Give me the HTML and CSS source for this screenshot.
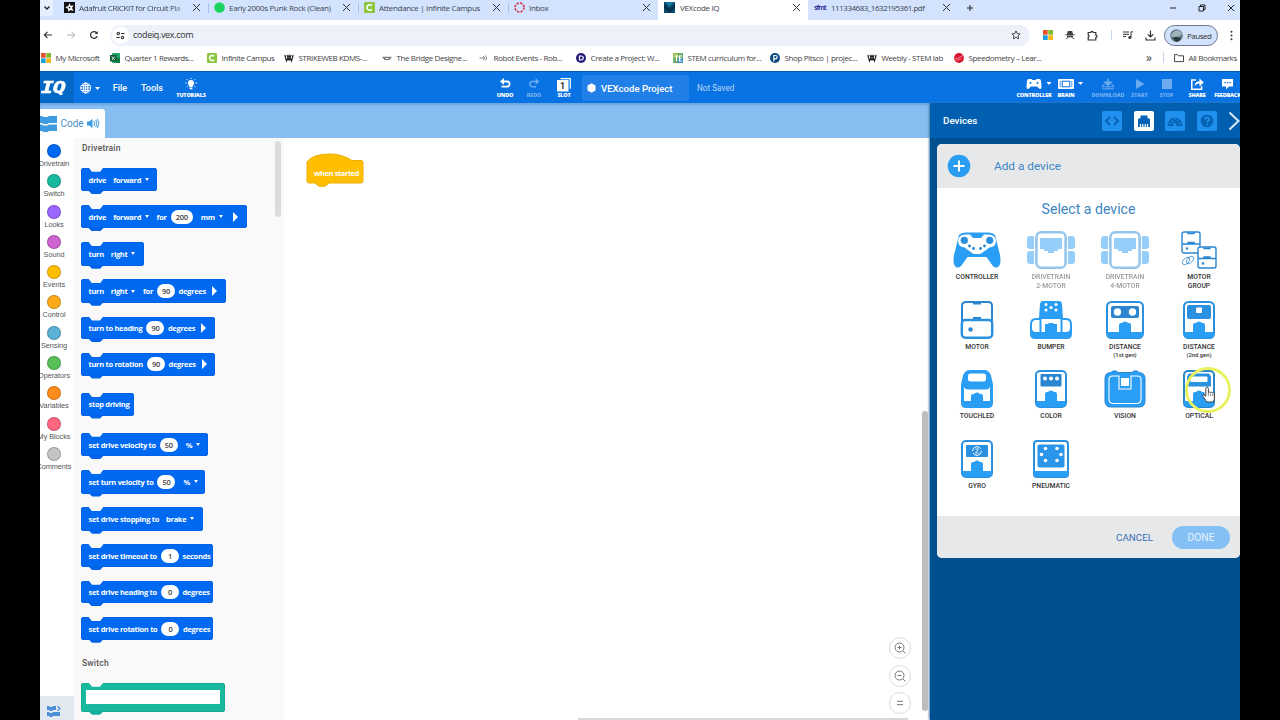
FILE: index.html
```html
<!DOCTYPE html>
<html lang="en">
<head>
    <meta charset="UTF-8">
    <title>VEXcode IQ</title>
    <link rel="stylesheet" href="styles.css">
</head>
<body>
<div class="screen">

    <!-- Browser tabs -->
    <div class="tabs">
        <div class="tab-search"><svg width="8" height="6" viewBox="0 0 8 6"><path d="M1.5 1.5L4 4l2.5-2.5" fill="none" stroke="#222" stroke-width="1.3"/></svg></div>
        <div class="tab">
            <svg class="fav" viewBox="0 0 11 11"><rect width="11" height="11" fill="#111"/><path d="M5.5 1l1.2 2.8 3-.4-1.7 2.4 1.5 3.2-3-1-2.2 1.7-.2-2.8L1.2 5l3-.8z" fill="#fff"/><circle cx="5.5" cy="5.6" r=".9" fill="#111"/></svg>
            <span class="tab-title t1">Adafruit CRICKIT for Circuit Pla</span><span class="x"></span>
        </div>
        <div class="tab">
            <svg class="fav" viewBox="0 0 11 11"><circle cx="5.5" cy="5.5" r="5.3" fill="#1ed760"/><path d="M2.5 4q3-1 6 .6M3 6q2.5-.7 5 .5M3.2 7.7q2-.5 4 .4" stroke="#1bc457" fill="none" stroke-width=".8"/></svg>
            <span class="tab-title">Early 2000s Punk Rock (Clean)</span><span class="x"></span>
        </div>
        <div class="tab">
            <svg class="fav" viewBox="0 0 11 11"><rect width="11" height="11" rx="1" fill="#8cc63f"/><path d="M7.8 3.6A2.8 2.8 0 1 0 7.8 7.4" fill="none" stroke="#fff" stroke-width="1.6"/></svg>
            <span class="tab-title">Attendance | Infinite Campus</span><span class="x"></span>
        </div>
        <div class="tab">
            <svg class="fav" viewBox="0 0 11 11"><circle cx="5.5" cy="5.5" r="4.5" fill="none" stroke="#d0314c" stroke-width="1.7" stroke-dasharray="2.3 1.23"/></svg>
            <span class="tab-title">Inbox</span><span class="x"></span>
        </div>
        <div class="tab active">
            <svg class="fav" viewBox="0 0 11 11"><rect width="11" height="11" fill="#0a4a6e"/><path d="M0 2l5.5 5L11 2v4l-5.5 5L0 6z" fill="#06304e"/><path d="M1 0h9L5.5 5z" fill="#1a78a8"/></svg>
            <span class="tab-title">VEXcode IQ</span><span class="x"></span>
        </div>
        <div class="tab last">
            <span class="sfmt">sfmt</span>
            <span class="tab-title">111334683_1632195361.pdf</span><span class="x"></span>
        </div>
        <svg class="plus" width="8" height="8" viewBox="0 0 8 8"><path d="M4 1v6M1 4h6" stroke="#222"/></svg>
        <div class="win-buttons">
            <svg width="8" height="8" viewBox="0 0 8 8"><path d="M1 4h6" stroke="#222"/></svg>
            <svg width="8" height="8" viewBox="0 0 8 8"><path d="M1 2.5h4.5V7H1zM2.5 2.5V1H7v4.5H5.5" fill="none" stroke="#222"/></svg>
            <svg width="8" height="8" viewBox="0 0 8 8"><path d="M1 1l6 6M7 1L1 7" stroke="#222"/></svg>
        </div>
    </div>

    <!-- Address row -->
    <div class="toolbar">
        <svg class="nav" viewBox="0 0 10 10"><path d="M9 5H1.5M4.5 1.8L1.3 5l3.2 3.2" fill="none" stroke="#333" stroke-width="1.1"/></svg>
        <svg class="nav" viewBox="0 0 10 10"><path d="M1 5h7.5M5.5 1.8L8.7 5 5.5 8.2" fill="none" stroke="#aaa"/></svg>
        <svg class="nav" viewBox="0 0 10 10"><path d="M8.2 6A3.4 3.4 0 1 1 7.4 2.6L8 3.3" fill="none" stroke="#333" stroke-width="1.2"/><path d="M8.8 1v3H5.8z" fill="#333"/></svg>
        <div class="address">
            <span class="site"><svg width="9" height="9" viewBox="0 0 9 9"><g fill="none" stroke="#333" stroke-width="1.1"><circle cx="2.3" cy="2.5" r="1.2"/><path d="M5 2.5h3.5M.5 6.5h3.3"/><circle cx="6.5" cy="6.5" r="1.2"/></g></svg></span>
            <span class="url">codeiq.vex.com</span>
            <svg class="star" width="10" height="10" viewBox="0 0 10 10"><path d="M5 .9l1.2 2.7 2.9.3L7 5.9l.6 2.9L5 7.3 2.4 8.8 3 5.9.9 3.9l2.9-.3z" fill="none" stroke="#333" stroke-width=".9"/></svg>
        </div>
        <div class="tools">
            <svg width="10" height="10" viewBox="0 0 10 10"><path d="M0 0h4.7v4.7H0z" fill="#e8502a"/><path d="M5.3 0H10v4.7H5.3z" fill="#7db928"/><path d="M0 5.3h4.7V10H0z" fill="#1c9fe0"/><path d="M5.3 5.3H10V10H5.3z" fill="#f7b512"/></svg>
            <svg width="10" height="10" viewBox="0 0 10 10"><path d="M2.8 1h4.4l.8 3.2H2zM.5 4.2h9v1h-9z" fill="#444"/><path d="M2 5.5h6v1.8H2z" fill="#444"/><path d="M1 9.2l2-2M9 9.2l-2-2" stroke="#444"/></svg>
            <svg width="11" height="11" viewBox="0 0 11 11"><path d="M1.2 2.5h2.6a1.2 1.2 0 0 1 2.4 0h2.6v2.6a1.2 1.2 0 0 1 0 2.4V10H1.2V7.4a1.2 1.2 0 0 0 0-2.3z" fill="none" stroke="#333" stroke-width="1.2"/></svg>
            <i class="vline"></i>
            <svg width="11" height="10" viewBox="0 0 11 10"><path d="M1 2h6M1 4.3h6M1 6.6h3M9 7.5V1.8h1.8" fill="none" stroke="#333"/><circle cx="7.8" cy="7.6" r="1.5" fill="#333"/></svg>
            <svg width="11" height="11" viewBox="0 0 11 11"><path d="M5.5.5v6.3M2.8 4.3l2.7 2.7 2.7-2.7M1 7.5V10h9V7.5" fill="none" stroke="#333" stroke-width="1.2"/></svg>
        </div>
        <div class="profile">
            <svg width="13" height="13" viewBox="0 0 13 13"><circle cx="6.5" cy="6.5" r="6.3" fill="#5e7480"/><path d="M1 6q3-5 7-5 3 1 4.5 4-3 3-5 3t-6 0z" fill="#9fb1ba"/><path d="M3 9q4-3 8 1-2 3-5 3z" fill="#2c3b3f"/></svg>
            <span>Paused</span>
        </div>
        <svg class="dots" width="3" height="11" viewBox="0 0 3 11"><g fill="#333"><circle cx="1.5" cy="1.8" r="1"/><circle cx="1.5" cy="5.5" r="1"/><circle cx="1.5" cy="9.2" r="1"/></g></svg>
    </div>

    <!-- Bookmarks -->
    <div class="bookmarks">
        <div class="bm"><svg viewBox="0 0 10 10"><path d="M0 0h4.7v4.7H0z" fill="#e8502a"/><path d="M5.3 0H10v4.7H5.3z" fill="#7db928"/><path d="M0 5.3h4.7V10H0z" fill="#1c9fe0"/><path d="M5.3 5.3H10V10H5.3z" fill="#f7b512"/></svg><span>My Microsoft</span></div>
        <div class="bm"><svg viewBox="0 0 10 10"><rect x="2" width="8" height="10" rx="1" fill="#21a366"/><path d="M6 5h4v5H6z" fill="#107c41"/><rect y="2" width="6.5" height="6.5" fill="#0d5c33"/><path d="M1.8 3.5l3 3.5M4.8 3.5l-3 3.5" stroke="#fff" stroke-width=".9"/></svg><span>Quarter 1 Rewards...</span></div>
        <div class="bm"><svg viewBox="0 0 10 10"><rect width="10" height="10" rx="1" fill="#8cc63f"/><path d="M7.2 3.3A2.6 2.6 0 1 0 7.2 6.7" fill="none" stroke="#fff" stroke-width="1.5"/></svg><span>Infinite Campus</span></div>
        <div class="bm"><svg viewBox="0 0 10 10"><path d="M.8 2l1.7 6L5 2.5 7.5 8l1.7-6M3 2l2 5.5M7 2L5 7.5" fill="none" stroke="#222" stroke-width="1.2"/></svg><span>STRIKEWEB KDMS-...</span></div>
        <div class="bm"><svg viewBox="0 0 10 10"><path d="M.5 4.3h9M1.5 4.5q0 2.3 3.5 2.3t3.5-2.3M3 4.5v2M7 4.5v2" fill="none" stroke="#555" stroke-width=".9"/></svg><span>The Bridge Designe...</span></div>
        <div class="bm"><svg viewBox="0 0 10 10"><path d="M.5 5h4.5M4 3l2 2-2 2M6.5 2.5q2.5 2.5 0 5" fill="none" stroke="#777" stroke-width=".9"/></svg><span>Robot Events - Rob...</span></div>
        <div class="bm"><svg viewBox="0 0 10 10"><circle cx="5" cy="5" r="5" fill="#241b7a"/><path d="M3.5 3h1.8a2 2 0 0 1 0 4H3.5z" fill="none" stroke="#fff" stroke-width="1.2"/></svg><span>Create a Project: W...</span></div>
        <div class="bm"><svg viewBox="0 0 10 10"><rect width="10" height="10" fill="#6fae6b"/><path d="M0 0h5v5H0z" fill="#9cc355"/><path d="M5 5h5v5H5z" fill="#3b8fc0"/><path d="M1.5 3h4M3.5 3v5M9 3H6.5v5H9M6.5 5.5h2" stroke="#fff" stroke-width="1.1" fill="none"/></svg><span>STEM curriculum for...</span></div>
        <div class="bm"><svg viewBox="0 0 10 10"><circle cx="5" cy="5" r="5" fill="#0b477d"/><path d="M3.8 8.5V2.5h1.7a1.6 1.6 0 0 1 0 3.3H4" fill="none" stroke="#fff" stroke-width="1.2"/></svg><span>Shop Pitsco | projec...</span></div>
        <div class="bm"><svg viewBox="0 0 10 10"><path d="M.8 2l1.7 6L5 2.5 7.5 8l1.7-6M3 2l2 5.5M7 2L5 7.5" fill="none" stroke="#222" stroke-width="1.2"/></svg><span>Weebly - STEM lab</span></div>
        <div class="bm"><svg viewBox="0 0 10 10"><circle cx="5" cy="5" r="4.9" fill="#d9142f"/><path d="M1 5.8q4-1 8-3.3M1.8 7.5l6-1.8" stroke="#f3a0aa" stroke-width=".8" fill="none"/></svg><span>Speedometry – Lear...</span></div>
        <div class="more">»</div>
        <div class="bm all"><svg viewBox="0 0 10 10"><path d="M.6 1.6h3l1 1.2h4.9v5.8H.6z" fill="none" stroke="#444"/></svg><span>All Bookmarks</span></div>
    </div>

    <!-- VEXcode header -->
    <header class="appbar">
        <div class="logo"><span>IQ</span></div>
        <div class="globe">
            <svg width="20" height="12" viewBox="0 0 20 12"><g fill="none" stroke="#fff"><circle cx="5.7" cy="6" r="5"/><ellipse cx="5.7" cy="6" rx="2.2" ry="5"/><path d="M.7 6h10M5.7 1v10M1.5 3.5h8.4M1.5 8.5h8.4"/></g><path d="M15 5h5l-2.5 3z" fill="#fff"/></svg>
        </div>
        <div class="menu">File</div>
        <div class="menu">Tools</div>
        <div class="act">
            <svg width="14" height="12" viewBox="0 0 14 12"><path d="M7 2a3.2 3.2 0 0 0-1.7 5.9V9h3.4V7.9A3.2 3.2 0 0 0 7 2zM5.6 9.6h2.8v1.6H5.6z" fill="#fff"/><path d="M7 0v1M1.2 5h1.5M11.3 5h1.5M2.7 1.2l1 1M11.3 1.2l-1 1M2.7 9l1-.8M11.3 9l-1-.8" stroke="#fff"/></svg>
            <b>TUTORIALS</b>
        </div>
        <div></div>
        <div class="act">
            <svg width="12" height="12" viewBox="0 0 12 12"><path d="M3.5 3.5h4.5a2.6 2.6 0 0 1 0 5.2H2.5" fill="none" stroke="#fff" stroke-width="1.8"/><path d="M5 0v7L1 3.5z" fill="#fff"/></svg>
            <b>UNDO</b>
        </div>
        <div class="act off">
            <svg width="12" height="12" viewBox="0 0 12 12"><path d="M9 3.5H4.5a2.6 2.6 0 0 0 0 5.2H8" fill="none" stroke="#fff" stroke-width="1.4"/><path d="M7.7 0v7l3.5-3.5z" fill="#fff"/></svg>
            <b>REDO</b>
        </div>
        <div class="act slot">
            <svg width="14" height="14" viewBox="0 0 14 14"><path d="M3.5.7h9.8v10" fill="none" stroke="#fff" stroke-width="1.2"/><rect y="2" width="11.5" height="11.5" fill="#fff"/><text x="5.7" y="10.5" text-anchor="middle">1</text></svg>
            <b>SLOT</b>
        </div>
        <div></div>
        <div class="project"><svg width="9" height="10" viewBox="0 0 9 10"><path d="M4.5.3l4 2.3v4.8l-4 2.3-4-2.3V2.6z" fill="#fff"/></svg><span>VEXcode Project</span></div>
        <div class="saved">Not Saved</div>
        <div class="act">
            <svg width="16" height="12" viewBox="0 0 16 12"><path d="M2.5 1h3l.8 1h3.4l.8-1h3q1.2 0 1.4 1.5l.6 6.5q0 2-1.4 2-.8 0-1.5-1L11 8.5H5L3.4 10q-.7 1-1.5 1Q.5 11 .5 9l.6-6.5Q1.3 1 2.5 1z" fill="#fff"/><circle cx="4.5" cy="5" r="1" fill="#0a6fe0"/><circle cx="11.5" cy="5" r="1" fill="#0a6fe0"/><path d="M20.5 4h5L23 7z" fill="#fff"/></svg>
            <b>CONTROLLER</b>
        </div>
        <div class="act">
            <svg width="16" height="12" viewBox="0 0 16 12"><rect y="1" width="16" height="10" rx="1" fill="#fff"/><rect x="4.2" y="3.2" width="7.6" height="5.6" fill="none" stroke="#0a6fe0"/><path d="M2.2 3v6M13.8 3v6" stroke="#0a6fe0" stroke-dasharray="1.5 .7"/><path d="M20 4h5l-2.5 3z" fill="#fff"/></svg>
            <b>BRAIN</b>
        </div>
        <div></div>
        <div class="act off">
            <svg width="12" height="12" viewBox="0 0 12 12"><path d="M6 .5v4M3 4.2h6L6 7.5z" fill="#fff" stroke="#fff" stroke-width="1.5"/><path d="M.7 7.2l2-1M11.3 7.2l-2-1M.7 7.5v3.3h10.6V7.5L8.5 9h-5z" fill="none" stroke="#fff"/></svg>
            <b>DOWNLOAD</b>
        </div>
        <div class="act off">
            <svg width="10" height="12" viewBox="0 0 10 12"><path d="M1 1l8.5 5L1 11z" fill="#fff"/></svg>
            <b>START</b>
        </div>
        <div class="act off">
            <svg width="10" height="12" viewBox="0 0 10 12"><path d="M0 1h10v10H0z" fill="#fff"/></svg>
            <b>STOP</b>
        </div>
        <div></div>
        <div class="act">
            <svg width="13" height="12" viewBox="0 0 13 12"><path d="M5 2H.8v9.2h9.8V8" fill="none" stroke="#fff" stroke-width="1.5"/><path d="M3.5 8Q4 3.3 8.5 3.3V.5l4.3 4-4.3 4V5.5Q5.5 5.3 3.5 8z" fill="#fff"/></svg>
            <b>SHARE</b>
        </div>
        <div class="act">
            <svg width="11" height="12" viewBox="0 0 11 12"><path d="M0 1h11v7.5H7L4 11.5v-3H0z" fill="#fff"/><path d="M2.3 4.7h1.4M4.8 4.7h1.4M7.3 4.7h1.4" stroke="#0a6fe0" stroke-width="1.3"/></svg>
            <b>FEEDBACK</b>
        </div>
    </header>

    <main class="editor">
        <section class="left">
            <div class="codebar">
                <div class="code-tab">
                    <svg width="17" height="16" viewBox="0 0 17 16"><path d="M0 0h2l1.5 1h4L9 0h8v7H9L7.500 8h-4L2 7H0zM0 8.5h2l1.5 1h4l1.5-1h8V15H9l-1.500 1h-4L2 15H0z" fill="#3d9be0"/></svg>
                    <span>Code</span>
                    <svg width="12" height="11" viewBox="0 0 12 11"><path d="M0 3.5h2.3L5.5.8v9.4L2.3 7.5H0z" fill="#3d9be0"/><path d="M7 3q1.5 2.5 0 5M8.8 1.8q2.3 3.7 0 7.4M10.4.8q3 4.7 0 9.4" fill="none" stroke="#3d9be0"/></svg>
                </div>
            </div>

            <div class="work">
                <nav class="rail">
                    <div class="cat"><i class="drive"></i><span>Drivetrain</span></div>
                    <div class="cat"><i class="switch"></i><span>Switch</span></div>
                    <div class="cat"><i class="looks"></i><span>Looks</span></div>
                    <div class="cat"><i class="sound"></i><span>Sound</span></div>
                    <div class="cat"><i class="events"></i><span>Events</span></div>
                    <div class="cat"><i class="control"></i><span>Control</span></div>
                    <div class="cat"><i class="sensing"></i><span>Sensing</span></div>
                    <div class="cat"><i class="operators"></i><span>Operators</span></div>
                    <div class="cat"><i class="variables"></i><span>Variables</span></div>
                    <div class="cat"><i class="myblocks"></i><span>My Blocks</span></div>
                    <div class="cat"><i class="comments"></i><span>Comments</span></div>
                    <div class="ext"><svg width="14" height="13" viewBox="0 0 14 13"><path d="M0 1h2l1 1h2l1-1h3v4H6L5 6H3L2 5H0zM0 7h2l1 1h2l1-1h7v4H6l-1 1H3l-1-1H0z" fill="#4c8fd8"/><path d="M10.5 1.2L13 3.5l-2.5 2.3" fill="none" stroke="#4c8fd8" stroke-width="1.2"/></svg></div>
                </nav>

                <div class="flyout">
                    <h3>Drivetrain</h3>
                    <div class="blocks">
                        <div class="block w76"><span>drive</span><span class="dd">forward</span></div>
                        <div class="block w166"><span>drive</span><span class="dd">forward</span><span>for</span><em>200</em><span class="dd">mm</span><u></u></div>
                        <div class="block w63"><span>turn</span><span class="dd">right</span></div>
                        <div class="block w145"><span>turn</span><span class="dd">right</span><span>for</span><em>90</em><span>degrees</span><u></u></div>
                        <div class="block short w134"><span>turn to heading</span><em>90</em><span>degrees</span><u></u></div>
                        <div class="block short w134"><span>turn to rotation</span><em>90</em><span>degrees</span><u></u></div>
                        <div class="block short apart w53"><span>stop driving</span></div>
                        <div class="block apart w127"><span>set drive velocity to</span><em>50</em><span class="dd">%</span></div>
                        <div class="block w124"><span>set turn velocity to</span><em>50</em><span class="dd">%</span></div>
                        <div class="block w122"><span>set drive stopping to</span><span class="dd">brake</span></div>
                        <div class="block short w132"><span>set drive timeout to</span><em>1</em><span>seconds</span></div>
                        <div class="block short w132"><span>set drive heading to</span><em>0</em><span>degrees</span></div>
                        <div class="block short w132"><span>set drive rotation to</span><em>0</em><span>degrees</span></div>
                    </div>
                    <h3 class="second">Switch</h3>
                    <div class="block switch-block"><div class="switch-field"></div></div>
                    <div class="flyout-bar"></div>
                </div>

                <div class="canvas">
                    <div class="hat">
                        <svg width="58" height="35" viewBox="0 0 58 35"><path d="M1 9Q6 1 24 1q12 0 22 6.5h9q2 0 2 2V28q0 2-2 2H23l-3 2.5q-1 .8-2 .8h-4q-1 0-2-.8L9 30H3q-2 0-2-2z" fill="#ffbf00" stroke="#eab000"/></svg>
                        <span>when started</span>
                    </div>
                    <div class="zoom">
                        <i><svg width="12" height="12" viewBox="0 0 12 12"><circle cx="5.5" cy="5.5" r="4.5"/><path d="M9 9l2.5 2.5M3.5 5.5h4M5.5 3.5v4"/></svg></i>
                        <i><svg width="12" height="12" viewBox="0 0 12 12"><circle cx="5.5" cy="5.5" r="4.5"/><path d="M9 9l2.5 2.5M3.5 5.5h4"/></svg></i>
                        <i><svg width="12" height="12" viewBox="0 0 12 12"><path d="M3 4.3h6M3 7.7h6"/></svg></i>
                    </div>
                    <div class="vbar"></div>
                    <div class="hbar"></div>
                </div>
            </div>
        </section>

        <!-- Devices -->
        <aside class="devices">
            <div class="dev-head">
                <h2>Devices</h2>
                <i><svg width="14" height="12" viewBox="0 0 14 12"><path d="M5 2L1 6l4 4M9 2l4 4-4 4" fill="none" stroke="#0563b5" stroke-width="1.8"/></svg></i>
                <i class="on"><svg width="14" height="14" viewBox="0 0 14 14"><path d="M1 5l2.5-1V1.5h7V4L13 5v8H1z" fill="#0563b5"/><path d="M3.5 13v-3M5.8 13v-3M8.2 13v-3M10.5 13v-3" stroke="#fff" stroke-width="1.2"/></svg></i>
                <i><svg width="16" height="12" viewBox="0 0 16 12"><path d="M.5 11a7.5 8.5 0 0 1 15 0z" fill="#0563b5"/><path d="M8 9.5L4.5 5M8 2.5v2M2 8l2 .7M14 8l-2 .7M11.5 4.5l-1 1.3" stroke="#2196f3" stroke-width="1.1"/><circle cx="8" cy="10" r="1.5" fill="#2196f3"/></svg></i>
                <i><svg width="14" height="14" viewBox="0 0 14 14"><circle cx="7" cy="7" r="6.3" fill="#0563b5"/><path d="M4.9 5.5q0-2 2.1-2t2.1 1.8q0 1-1 1.5T7 8.5M7 9.7v1.5" fill="none" stroke="#2196f3" stroke-width="1.5"/></svg></i>
                <svg class="chev" width="13" height="20" viewBox="0 0 13 20"><path d="M1.5 1.5L10.5 10l-9 8.5" fill="none" stroke="#d3e5f5" stroke-width="2.2"/></svg>
            </div>

            <div class="card">
                <div class="add"><svg width="24" height="24" viewBox="0 0 24 24"><circle cx="12" cy="12" r="11.3" fill="#2a9df0"/><path d="M12 6.5v11M6.5 12h11" stroke="#fff" stroke-width="2"/></svg><span>Add a device</span></div>
                <h4>Select a device</h4>
                <div class="grid">
                    <div class="dev">
                        <svg width="48" height="38" viewBox="0 0 48 38"><path d="M6 4q2-2.5 6-2.5h24q4 0 6 2.5l5 20q1.5 10-2 12-3.5 1.5-5.5-1.5l-6-8.5h-19l-6 8.5q-2 3-5.5 1.5-3.5-2-2-12z" fill="#2a9df4"/><path d="M8 4.5q2-1 5-1h4l3 3.5h8l3-3.5h4q3 0 5 1 4 3 2.5 8-1 3.5-6 4l-7 5q-2 1.5-3 1.5h-5q-1.5 0-3-1.5l-7-5q-5-.5-6-4Q4 7.5 8 4.5z" fill="#fff"/><circle cx="11.3" cy="9.3" r="3.6" fill="#2a90e0"/><circle cx="36.7" cy="9.3" r="3.6" fill="#2a90e0"/><g fill="#2785cf"><circle cx="16.5" cy="15" r="1.4"/><circle cx="20.5" cy="17.5" r="1.4"/><circle cx="31.5" cy="15" r="1.4"/><circle cx="27.5" cy="17.5" r="1.4"/></g></svg>
                        <b>CONTROLLER</b>
                    </div>
                    <div class="dev dim">
                        <svg width="48" height="38" viewBox="0 0 48 38"><g fill="#2a9df4"><rect y="5" width="9" height="13" rx="3"/><rect x="39" y="5" width="9" height="13" rx="3"/><rect y="20" width="9" height="13" rx="3"/><rect x="39" y="20" width="9" height="13" rx="3"/></g><path d="M7.5 4v30M40.5 4v30" stroke="#fff"/><rect x="9.5" y="1.2" width="29" height="35.5" rx="4.5" fill="#fff" stroke="#2a8cdc" stroke-width="2.4"/><path d="M13 7h22v11h-4v2h-4v2h-6v-2h-4v-2h-4z" fill="#2a9df4"/></svg>
                        <b>DRIVETRAIN</b><b class="line2">2-MOTOR</b>
                    </div>
                    <div class="dev dim">
                        <svg width="48" height="38" viewBox="0 0 48 38"><g fill="#2a9df4"><rect y="5" width="9" height="13" rx="3"/><rect x="39" y="5" width="9" height="13" rx="3"/><rect y="20" width="9" height="13" rx="3"/><rect x="39" y="20" width="9" height="13" rx="3"/></g><path d="M7.5 4v30M40.5 4v30" stroke="#fff"/><rect x="9.5" y="1.2" width="29" height="35.5" rx="4.5" fill="#fff" stroke="#2a8cdc" stroke-width="2.4"/><path d="M13 7h22v11h-4v2h-4v2h-6v-2h-4v-2h-4z" fill="#2a9df4"/></svg>
                        <b>DRIVETRAIN</b><b class="line2">4-MOTOR</b>
                    </div>
                    <div class="dev">
                        <svg width="36" height="38" viewBox="0 0 36 38"><g fill="none" stroke="#2a86d0" stroke-width="1.4"><rect x="1" y="1" width="18" height="21" rx="2"/><path d="M1 13h18M7 1v1.5h6V1M7 13v-1.5h6V13"/><rect x="17" y="16" width="18" height="21" rx="2" fill="#fff"/><path d="M17 27.5h18M23 16v1.5h6V16M23 27.5V26h6v1.5"/><ellipse cx="5" cy="30" rx="4.5" ry="2.7" transform="rotate(-45 5 30)" stroke-width=".7"/><ellipse cx="9" cy="29" rx="4.5" ry="2.7" transform="rotate(-45 9 29)" stroke-width=".7"/></g><circle cx="6" cy="17.5" r="1.2" fill="#2a86d0"/><circle cx="22" cy="32.5" r="1.3" fill="#2a86d0"/></svg>
                        <b>MOTOR</b><b class="line2">GROUP</b>
                    </div>
                    <div class="dev">
                        <svg width="34" height="38" viewBox="0 0 34 38"><path d="M2 21V5q0-4 4-4h22q4 0 4 4v16" fill="none" stroke="#2a86d0" stroke-width="2"/><path d="M13 1h8v2.5h-8zM13 16h8v3h-8z" fill="#2a86d0"/><rect x="1.8" y="19" width="30.4" height="17.7" rx="3.5" fill="#fff" stroke="#2a90e0" stroke-width="2.4"/><circle cx="10.5" cy="28.5" r="2.2" fill="#2a86d0"/></svg>
                        <b>MOTOR</b>
                    </div>
                    <div class="dev">
                        <svg width="42" height="38" viewBox="0 0 42 38"><path d="M13 0h16q2.5 0 3 3l1 14h3q6 0 6 6v10q0 5-5 5H5q-5 0-5-5V23q0-6 6-6h3l1-14q.5-3 3-3z" fill="#2a9df4"/><path d="M11.5 18h19v13H27v-8h-3l-1-1h-4l-1 1h-3v8h-3.5z" fill="#fff"/><path d="M9.5 19V31H6q-4 0-4-4v-3.5q0-4.5 4-4.5zM32.5 19V31H36q4 0 4-4v-3.5q0-4.5-4-4.5z" fill="#fff"/><g fill="#fff"><circle cx="16" cy="3.5" r="1.5"/><circle cx="26" cy="3.5" r="1.5"/><circle cx="21" cy="6.5" r="1.6"/><circle cx="16" cy="9" r="1.5"/><circle cx="26" cy="9" r="1.5"/></g></svg>
                        <b>BUMPER</b>
                    </div>
                    <div class="dev">
                        <svg width="38" height="38" viewBox="0 0 38 38"><rect x="1" y="1" width="36" height="36" rx="4.5" fill="#fff" stroke="#2a90e0" stroke-width="2"/><path d="M1 31h12v-7q0-2 2-2h1q1-1.5 3-1.5t3 1.5h1q2 0 2 2v7h12v2q0 4-4 4H5q-4 0-4-4z" fill="#2a9df4"/><rect x="5" y="5" width="28" height="12" rx="2" fill="#2a86d0"/><circle cx="11.5" cy="11" r="3.7" fill="#fff"/><circle cx="26.5" cy="11" r="3.7" fill="#fff"/></svg>
                        <b>DISTANCE</b><b class="gen">(1st gen)</b>
                    </div>
                    <div class="dev">
                        <svg width="32" height="38" viewBox="0 0 32 38"><rect x="1" y="1" width="30" height="36" rx="4.5" fill="#fff" stroke="#2a90e0" stroke-width="2"/><path d="M1 31h9v-7q0-2 2-2h1q1-1.5 3-1.5t3 1.5h1q2 0 2 2v7h9v2q0 4-4 4H5q-4 0-4-4z" fill="#2a9df4"/><rect x="4" y="4" width="24" height="14" rx="2" fill="#2a90e0"/><rect x="13" y="6.5" width="6" height="5.5" rx="1" fill="#fff"/></svg>
                        <b>DISTANCE</b><b class="gen">(2nd gen)</b>
                    </div>
                    <div class="dev">
                        <svg width="32" height="38" viewBox="0 0 32 38"><path d="M9 0h14q5 0 7 5.5l2 9V33q0 5-5 5H5q-5 0-5-5V14.5l2-9Q4 0 9 0z" fill="#2a9df4"/><rect x="7" y="3.5" width="18" height="8" rx="2.5" fill="#fff"/><path d="M3 17q1 2.5 4 2.5h18q3 0 4-2.5v14h-7v-5q0-2-2-2h-1q-1-1.5-3-1.5T13 24h-1q-2 0-2 2v5H3z" fill="#fff"/></svg>
                        <b>TOUCHLED</b>
                    </div>
                    <div class="dev">
                        <svg width="32" height="38" viewBox="0 0 32 38"><rect x="1" y="1" width="30" height="36" rx="4" fill="#fff" stroke="#2a90e0" stroke-width="2"/><path d="M1 31h9v-7q0-2 2-2h1q1-1.5 3-1.5t3 1.5h1q2 0 2 2v7h9v2q0 4-4 4H5q-4 0-4-4z" fill="#2a9df4"/><rect x="5.5" y="4" width="21" height="12.5" rx="1" fill="#2a86d0"/><g fill="#fff"><circle cx="10" cy="8.5" r="2"/><circle cx="16" cy="8.5" r="2"/><circle cx="22" cy="8.5" r="2"/></g></svg>
                        <b>COLOR</b>
                    </div>
                    <div class="dev">
                        <svg width="42" height="38" viewBox="0 0 42 38"><path d="M7 2.5L8.5 1h4L14 2.5h14L29.5 1h4L35 2.5q6 .5 6 6V31q0 6-6 6H7q-6 0-6-6V8.5q0-6 6-6z" fill="#2a9df4" stroke="#2a86d0"/><path d="M15 6H8.5Q5 6 5 9.5V29q0 4.5 4.5 4.5h23Q37 33.5 37 29V9.5Q37 6 33.5 6H27v13H15z" fill="none" stroke="#fff" stroke-width="1.1"/><rect x="17" y="8" width="8" height="8" fill="#fff"/></svg>
                        <b>VISION</b>
                    </div>
                    <div class="dev">
                        <svg width="32" height="38" viewBox="0 0 32 38"><rect x="1" y="1" width="30" height="36" rx="4" fill="#fff" stroke="#2a86c8" stroke-width="2"/><path d="M1 31h9v-7q0-2 2-2h1q1-1.5 3-1.5t3 1.5h1q2 0 2 2v7h9v2q0 4-4 4H5q-4 0-4-4z" fill="#2a9df4"/><path d="M6 3.5h20l2 3v10H4v-10z" fill="#2a90e0"/><rect x="7.5" y="6.5" width="17" height="5.5" rx="1" fill="#fff"/></svg>
                        <b>OPTICAL</b>
                    </div>
                    <div class="dev">
                        <svg width="32" height="38" viewBox="0 0 32 38"><rect x="1" y="1" width="30" height="36" rx="4" fill="#fff" stroke="#2a90e0" stroke-width="2"/><path d="M1 31h9v-7q0-2 2-2h1q1-1.5 3-1.5t3 1.5h1q2 0 2 2v7h9v2q0 4-4 4H5q-4 0-4-4z" fill="#2a9df4"/><rect x="5" y="5" width="22" height="12" rx="1" fill="#2a90e0"/><circle cx="16" cy="11" r="4.3" fill="none" stroke="#fff" stroke-dasharray="11 2"/><path d="M14.5 9h3l-3 4h3" fill="none" stroke="#fff" stroke-width=".8"/></svg>
                        <b>GYRO</b>
                    </div>
                    <div class="dev">
                        <svg width="36" height="38" viewBox="0 0 36 38"><rect x="1" y="1" width="34" height="36" rx="3" fill="#fff" stroke="#2a90e0" stroke-width="2"/><path d="M1 31h34v3q0 3-3 3H4q-3 0-3-3z" fill="#2a9df4"/><rect x="4.5" y="4.5" width="27" height="23" rx="2" fill="#2a95ea"/><g fill="#fff"><circle cx="12.5" cy="8.5" r="1.8"/><circle cx="24" cy="8.5" r="1.8"/><circle cx="8.5" cy="14.5" r="1.8"/><circle cx="28" cy="14.5" r="1.8"/><circle cx="12.5" cy="20.5" r="1.8"/><circle cx="24" cy="20.5" r="1.8"/></g></svg>
                        <b>PNEUMATIC</b>
                    </div>
                </div>
                <div class="card-foot"><a>CANCEL</a><button>DONE</button></div>
            </div>
        </aside>
    </main>

    <!-- Mouse pointer with highlight ring -->
    <svg class="pointer" width="50" height="50" viewBox="0 0 50 50"><circle cx="25" cy="25" r="21.5" fill="none" stroke="#e8f25a" stroke-width="2.8"/><path d="M24 37l-4-5.5q-1-2 1-1.7l1.8 1.5V23.5q.1-1.3 1.3-1.3t1.3 1.3v4q1-.9 2 0 1.1-.7 2 .3 1.6-.5 2 1V33q0 2-1.2 4z" fill="#fff" stroke="#333" stroke-width=".9"/><path d="M25.4 28v3M27.7 28.5V31M29.8 29v2" stroke="#555" stroke-width=".7"/></svg>
</div>
</body>
</html>
```
FILE: styles.css
```css
* {
    box-sizing: border-box;
}

body {
    margin: 0;
    background: #000;
    font-family: "Open Sans", "Noto Sans", sans-serif;
}

svg {
    display: block;
    flex: none;
    overflow: visible;
}

i, em, u {
    font-style: normal;
    text-decoration: none;
}

h2, h3, h4 {
    margin: 0;
}

.screen {
    position: relative;
    display: flex;
    flex-direction: column;
    width: 1200px;
    height: 720px;
    margin: 0 auto;
    overflow: hidden;
    background: #fff;
}

/* browser */
.tabs {
    display: flex;
    align-items: center;
    height: 20px;
    padding-bottom: 4px;
    background: #d3e3fd;
    font-size: 8px;
    letter-spacing: -0.32px;
    color: #3c4450;
}

.tab-search {
    display: flex;
    justify-content: center;
    align-items: center;
    width: 13px;
    height: 16px;
    margin-right: 5px;
    background: #e6effd;
    border-radius: 0 0 4px 0;
}

.tab {
    display: flex;
    align-items: center;
    width: 150px;
    height: 20px;
    margin-top: 4px;
    padding: 0 8px 5px 6px;
}

.tab + .tab {
    background: linear-gradient(#a9c3ec, #a9c3ec) 0 3px / 1px 10px no-repeat;
}

.tab.active {
    background: #fff;
}

.tab.active + .tab {
    background: none;
}

.fav {
    width: 11px;
    height: 11px;
    margin-right: 4px;
}

.tab-title {
    flex: 1;
    white-space: nowrap;
}

.active .tab-title {
    padding-left: 1px;
}

.last .tab-title {
    letter-spacing: -0.48px;
}

.t1 {
    letter-spacing: -0.38px;
    -webkit-mask-image: linear-gradient(to right, #000 82%, transparent 96%);
    mask-image: linear-gradient(to right, #000 82%, transparent 96%);
}

.x {
    width: 7px;
    height: 7px;
    background:
        linear-gradient(45deg, transparent 43%, #333 43% 57%, transparent 57%),
        linear-gradient(-45deg, transparent 43%, #333 43% 57%, transparent 57%);
}

.sfmt {
    width: 17px;
    font-size: 7px;
    font-weight: bold;
    color: #3a38a0;
    letter-spacing: -1.1px;
}

.plus {
    margin-left: 8px;
}

.win-buttons {
    display: flex;
    gap: 21px;
    margin-left: auto;
    margin-right: 5px;
}

.toolbar {
    display: flex;
    align-items: center;
    height: 29px;
    padding-top: 1px;
    font-size: 9px;
    color: #333;
}

.nav {
    width: 10px;
    height: 10px;
    margin-left: 3px;
    margin-right: 10px;
}

.address {
    display: flex;
    align-items: center;
    width: 920px;
    height: 21px;
    margin-left: 1px;
    margin-right: 13px;
    padding: 0 9px 0 2px;
    background: #edf1f9;
    border-radius: 11px;
}

.site {
    display: flex;
    justify-content: center;
    align-items: center;
    width: 17px;
    height: 17px;
    margin-right: 4px;
    background: #fff;
    border-radius: 50%;
}

.url {
    padding-bottom: 1px;
    letter-spacing: -0.35px;
}

.star {
    margin-left: auto;
}

.tools {
    display: flex;
    align-items: center;
    gap: 12.2px;
    width: 121px;
}

.vline {
    width: 1px;
    height: 10px;
    margin-right: -2px;
    background: #c8d6ec;
}

.profile {
    display: flex;
    align-items: center;
    gap: 4px;
    width: 54px;
    height: 21px;
    padding-left: 5px;
    background: #d3e3fd;
    border: 1px solid #6c7790;
    border-radius: 11px;
    font-size: 8px;
    letter-spacing: -0.5px;
}

.dots {
    margin-left: 12px;
}

.bookmarks {
    display: grid;
    grid-template-columns: 69px 97px 77px 98px 97px 97px 97px 97px 97px 87px 190px 19px 1fr;
    align-items: center;
    height: 22px;
    padding-left: 1px;
    padding-bottom: 5px;
    font-size: 8px;
    letter-spacing: -0.38px;
    color: #444;
    white-space: nowrap;
}

.bm {
    display: flex;
    align-items: center;
    gap: 4.5px;
}

.bm svg {
    width: 10px;
    height: 10px;
}

.more {
    padding-left: 2px;
    font-size: 12px;
    line-height: 10px;
}

.all {
    padding-left: 10px;
    border-left: 1px solid #c8d6ec;
}

/* app header */
.appbar {
    display: grid;
    grid-template-columns: 34px 32px 28px 36px 42px 279px 28px 30px 30px 3px 107px 325px 40px 24px 13px 34px 29px 25px 5px 26px 35px;
    align-items: center;
    height: 32px;
    padding-bottom: 1px;
    background: #0a73e3;
    border-top: 1px solid #0a5cb0;
    color: #fff;
    font-family: Roboto, sans-serif;
}

.logo {
    align-self: stretch;
    padding-left: 1px;
    background: #0468c6;
    font: italic bold 15px/32px "DejaVu Sans Mono", monospace;
}

.logo span {
    display: inline-block;
    letter-spacing: -0.5px;
    transform: scaleX(1.42);
    transform-origin: left;
    -webkit-text-stroke: 0.5px #fff;
}

.globe {
    padding-left: 6px;
}

.menu {
    text-align: center;
    font-size: 9px;
    font-weight: 500;
}

.act {
    display: flex;
    flex-direction: column;
    align-items: center;
    gap: 2px;
}

.act b {
    font: 800 5.5px/7px "Open Sans", sans-serif;
    letter-spacing: -0.2px;
}

.off {
    opacity: 0.4;
}

.slot {
    gap: 0;
}

.slot text {
    font: bold 9px Roboto, sans-serif;
    fill: #333;
}

.project {
    display: flex;
    align-items: center;
    gap: 5px;
    height: 26px;
    padding-left: 5px;
    background: #2180e8;
    border-radius: 3px;
    font-size: 9.6px;
    font-weight: 500;
    white-space: nowrap;
}

.saved {
    padding-left: 8px;
    font-size: 8.2px;
    color: #b8d7f8;
}

/* editor */
.editor {
    display: flex;
    flex: 1;
    min-height: 0;
}

.left {
    display: flex;
    flex: none;
    flex-direction: column;
    width: 890px;
}

.codebar {
    height: 35px;
    padding-top: 6px;
    background: #87bdf0;
    box-shadow: inset 0 2px 2px #6aa6e0;
}

.code-tab {
    display: flex;
    align-items: center;
    gap: 3.5px;
    width: 65px;
    height: 29px;
    background: #fff;
    border-radius: 0 3px 0 0;
    font: 10px Roboto, sans-serif;
    color: #4a90c8;
}

.work {
    display: flex;
    flex: 1;
    min-height: 0;
}

.rail {
    display: flex;
    flex-direction: column;
    width: 34px;
    padding-top: 6px;
}

.cat {
    display: flex;
    flex-direction: column;
    align-items: center;
    width: 28px;
    height: 30.3px;
    font: 7.3px/9px "Liberation Sans", Arial, sans-serif;
    letter-spacing: -0.05px;
    color: #555;
    white-space: nowrap;
}

.cat i {
    width: 14px;
    height: 14px;
    margin-bottom: 1px;
    border: 1px solid rgba(0, 0, 0, 0.2);
    border-radius: 50%;
}

.drive { background: #0069f2; }
.switch { background: #19b9a0; }
.looks { background: #9966ff; }
.sound { background: #cf63cf; }
.events { background: #ffbf00; }
.control { background: #ffab19; }
.sensing { background: #5cb1d6; }
.operators { background: #59c059; }
.variables { background: #ff8c1a; }
.myblocks { background: #ff6680; }
.comments { background: #c4c4c4; }

.ext {
    height: 24px;
    margin-top: auto;
    padding: 9px 7px 0;
    background: #e1e8f0;
}

.flyout {
    position: relative;
    width: 210px;
    padding-left: 7px;
    background: #f9f9f9;
    overflow: hidden;
}

.flyout h3 {
    height: 29.8px;
    padding: 3px 0 0 1px;
    font: 500 8.5px/14px Roboto, sans-serif;
    letter-spacing: 0.2px;
    color: #555;
}

.flyout .second {
    height: 43px;
    padding-top: 16px;
}

.blocks {
    display: flex;
    flex-direction: column;
    gap: 13.7px;
}

.block {
    position: relative;
    display: flex;
    align-items: center;
    flex: none;
    height: 23.5px;
    padding-left: 6.5px;
    background: #0069f2;
    border: 1px solid #0062e6;
    border-radius: 2px;
    color: #fff;
    font-size: 7.5px;
    font-weight: bold;
    letter-spacing: -0.3px;
    white-space: nowrap;
}

/* puzzle notch and bump */
.block::before,
.block::after {
    content: "";
    position: absolute;
    left: 6px;
    width: 16px;
    height: 4px;
    clip-path: polygon(0 0, 100% 0, 75% 100%, 25% 100%);
}

.block::before {
    top: -2px;
    height: 5px;
    background: #f9f9f9;
}

.block::after {
    top: 100%;
    background: #0062e8;
}

.short {
    height: 22.7px;
}

.apart {
    margin-top: 3.6px;
}

.w53 { width: 53px; }
.w63 { width: 63px; }
.w76 { width: 76px; }
.w122 { width: 122px; }
.w124 { width: 124px; }
.w127 { width: 127px; }
.w132 { width: 132px; }
.w134 { width: 134px; }
.w145 { width: 145px; }
.w166 { width: 166px; }

.dd {
    display: flex;
    align-items: center;
    margin-left: 7px;
    margin-right: 7.5px;
}

.dd::after {
    content: "";
    margin-left: 4px;
    border: 2.5px solid transparent;
    border-top: 3px solid #fff;
    border-bottom: 0;
}

.block em {
    min-width: 18px;
    height: 14px;
    margin: 0 3.5px 0 4px;
    padding: 0 5px;
    background: #fff;
    border-radius: 7px;
    color: #444;
    font-weight: 600;
    line-height: 14px;
    text-align: center;
}

.block em + .dd {
    margin-left: 4.5px;
}

.block u {
    margin-left: 6px;
    border: 5px solid transparent;
    border-left: 5px solid #fff;
    border-right: 0;
}

.block .dd + u {
    margin-left: 3px;
}

.switch-block {
    width: 144px;
    height: 29px;
    padding: 0 4px;
    background: #19b9a0;
    border-color: #17a890;
}

.switch-block::after {
    background: #17ae97;
}

.switch-field {
    flex: 1;
    height: 14px;
    background: #fff;
}

.flyout-bar {
    position: absolute;
    top: 3px;
    right: 3px;
    width: 6px;
    height: 76px;
    background: #dcdcdc;
    border-radius: 3px;
}

.canvas {
    position: relative;
    flex: 1;
}

.hat {
    position: absolute;
    left: 22px;
    top: 15px;
}

.hat span {
    position: absolute;
    left: 8px;
    top: 15px;
    color: #fff;
    font-size: 7.5px;
    font-weight: bold;
    line-height: 11px;
    letter-spacing: -0.4px;
    white-space: nowrap;
}

.zoom {
    position: absolute;
    right: 19px;
    bottom: 6px;
    display: grid;
    gap: 5.5px;
}

.zoom i {
    display: grid;
    place-items: center;
    width: 22px;
    height: 22px;
    border: 1px solid #ddd;
    border-radius: 50%;
}

.zoom svg {
    fill: none;
    stroke: #777;
}

.vbar {
    position: absolute;
    right: 2px;
    top: 273px;
    width: 6px;
    height: 300px;
    background: #bdbdbd;
    border-radius: 3px;
}

.hbar {
    position: absolute;
    left: 294px;
    bottom: 0;
    width: 330px;
    height: 2px;
    background: #d8d8d8;
}

/* devices panel */
.devices {
    flex: 1;
    min-width: 0;
    background: #004f8f;
    box-shadow: -1px 0 2px #4c7ba5;
    font-family: Roboto, sans-serif;
}

.dev-head {
    display: flex;
    align-items: center;
    gap: 11.7px;
    height: 35px;
    padding-left: 13px;
    background: #005fb0;
}

.dev-head h2 {
    flex: none;
    width: 147.3px;
    font-size: 9.8px;
    font-weight: 500;
    color: #fff;
}

.dev-head i {
    display: grid;
    place-items: center;
    flex: none;
    width: 20px;
    height: 20px;
    background: #2090ee;
    border-radius: 2px;
}

.dev-head .on {
    background: #fff;
}

.dev-head .chev {
    margin-left: -1px;
}

.card {
    display: flex;
    flex-direction: column;
    height: 414px;
    margin: 6px 0 0 7px;
    background: #fff;
    border-radius: 5px;
    overflow: hidden;
}

.add {
    display: flex;
    align-items: center;
    gap: 23px;
    height: 44px;
    padding-left: 10px;
    background: #e6e8ea;
    font-size: 11.8px;
    color: #3d85c6;
}

.card h4 {
    height: 43px;
    font-size: 14.1px;
    font-weight: 400;
    line-height: 43px;
    text-align: center;
    color: #3d85c0;
}

.grid {
    display: grid;
    grid-template-columns: repeat(4, 74px);
    grid-auto-rows: 69.5px;
    padding-left: 3px;
}

.dev {
    display: flex;
    flex-direction: column;
    align-items: center;
}

.dev b {
    margin-top: 4px;
    font-size: 6.8px;
    font-weight: 500;
    line-height: 9px;
    color: #333;
}

.dev .line2 {
    margin-top: -0.5px;
}

.dev .gen {
    margin-top: -1px;
    font-size: 5.8px;
}

.dim {
    opacity: 0.5;
}

.card-foot {
    display: flex;
    justify-content: flex-end;
    align-items: center;
    gap: 19px;
    height: 42px;
    margin-top: auto;
    padding-right: 10px;
    background: #e6e8ea;
    font-size: 9.8px;
    color: #3a6db5;
}

.card-foot button {
    width: 58px;
    height: 23px;
    padding: 0;
    background: #85c0f5;
    border: 0;
    border-radius: 12px;
    color: #e4f2fd;
    font: 10.3px Roboto, sans-serif;
}

.pointer {
    position: absolute;
    left: 1143px;
    top: 365px;
}
```
